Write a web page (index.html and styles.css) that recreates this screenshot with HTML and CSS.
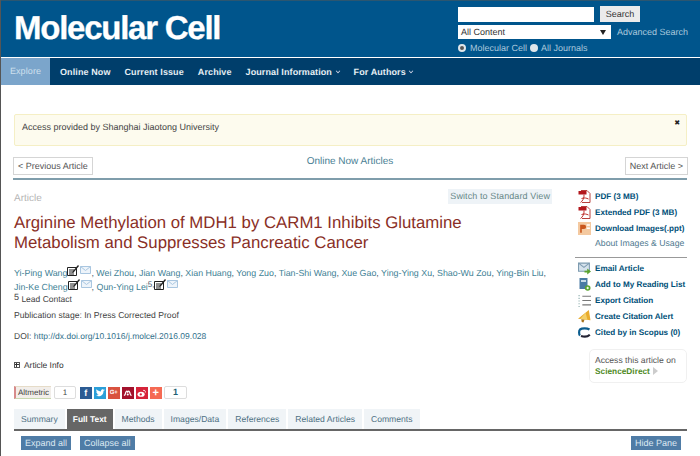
FILE: index.html
```html
<!DOCTYPE html>
<html lang="en">
<head>
    <meta charset="UTF-8">
    <title>Arginine Methylation of MDH1 by CARM1 - Molecular Cell</title>
    <link rel="stylesheet" href="styles.css">
</head>
<body>
  <svg class="defs" width="0" height="0">
    <symbol id="i-pdf" viewBox="0 0 12 13">
      <path d="M2.500 .5h6l3 3v9h-8" fill="#fff" stroke="#b8403c"/>
      <path d="M0 1h8v3.500H0z" fill="#b3171c"/>
      <path d="M2 12.500c2-1 4-5 3.500-8M3 8.500c3-1 5-.5 7 .5" fill="none" stroke="#c0332f"/>
    </symbol>
    <symbol id="i-ppt" viewBox="0 0 12 12">
      <path d="M0 0h12v12H0z" fill="#f4c9a0"/>
      <path d="M2 2.500h3.500a2 2 0 0 1 0 4H3.500V10H2z" fill="#c9561d"/>
      <path d="M8 2h3v1.500H8zM8 5h3v1.500H8z" fill="#fff"/>
    </symbol>
    <symbol id="i-email" viewBox="0 0 12 11">
      <path d="M.5 .5h10v7.500H.5z" fill="#d5e2ec" stroke="#7d9bb0"/>
      <path d="M.5 .5l5 4 5-4" fill="none" stroke="#7d9bb0"/>
      <path d="M6 7.500h2.500V5.500L12 8.200 8.500 11V9.200H6z" fill="#5aa32f"/>
    </symbol>
    <symbol id="i-list" viewBox="0 0 12 13">
      <path d="M1 0h8v11H1z" fill="#4a7ba4"/>
      <path d="M2.500 2h5v2h-5z" fill="#c9dbe8"/>
      <circle cx="9.200" cy="10" r="2.800" fill="#5aa32f"/>
      <path d="M8 10h2.400M9.200 8.800v2.400" stroke="#fff"/>
    </symbol>
    <symbol id="i-export" viewBox="0 0 12 12">
      <path d="M4 2h8M4 6h8M4 10h8" stroke="#777"/>
      <path d="M1 1v1M1 3.500v1M1 6v1M1 8.500v1M1 11v1" stroke="#8aa"/>
    </symbol>
    <symbol id="i-alert" viewBox="0 0 12 12">
      <path d="M10 0l1.500 9.500L0 8z" fill="#e9ac2e"/>
      <path d="M7 2.500l1.800 6.800L2 8.300z" fill="#f4d06a"/>
      <path d="M3 8.500l3 .5-1 2.500-1.500-.5z" fill="#a5711a"/>
    </symbol>
    <symbol id="i-scopus" viewBox="0 0 13 10">
      <path d="M11.500 2C9 .5 4 .5 2 2 .8 3.200 .8 6.800 2 8" fill="none" stroke="#0b5d8f" stroke-width="2.200"/>
      <path d="M3 8.500c3 1 7 .5 8.800-1.200" fill="none" stroke="#223" stroke-width="2.200"/>
    </symbol>
    <symbol id="i-edit" viewBox="0 0 12 11">
      <path d="M.5 2.500h9v8h-9z" fill="#fff" stroke="#222"/>
      <path d="M2 5h5M2 7h5M2 9h5" stroke="#222"/>
      <path d="M6 6l5-6 1 1-5 6-2 1z" fill="#222"/>
    </symbol>
    <symbol id="i-mail" viewBox="0 0 11 8">
      <path d="M.5 .5h10v7H.5z" fill="#eef4fa" stroke="#a9c6e0"/>
      <path d="M.5 .5l5 4 5-4" fill="none" stroke="#a9c6e0"/>
    </symbol>
  </svg>

  <header class="masthead">
    <div class="logo">Molecular Cell</div>
    <form class="search">
      <div class="search-row">
        <span class="search-input"></span>
        <span class="search-btn">Search</span>
      </div>
      <div class="search-row">
        <span class="search-select">All Content<i class="select-arrow"></i></span>
        <span class="search-adv">Advanced Search</span>
      </div>
      <div class="search-scope">
        <i class="radio radio-on"></i><span>Molecular Cell</span>
        <i class="radio"></i><span>All Journals</span>
      </div>
    </form>
  </header>

  <nav class="nav">
    <a class="nav-explore">Explore</a>
    <a>Online Now</a>
    <a>Current Issue</a>
    <a>Archive</a>
    <a>Journal Information <i class="caret"></i></a>
    <a>For Authors <i class="caret"></i></a>
  </nav>

  <div class="page">
    <div class="alert">
      Access provided by Shanghai Jiaotong University
      <span class="alert-close">&#10006;</span>
    </div>

    <div class="pager">
      <a class="pager-btn">&lt; Previous Article</a>
      <a class="pager-mid">Online Now Articles</a>
      <a class="pager-btn pager-next">Next Article &gt;</a>
    </div>

    <div class="article-top">
      <div class="article-main">
        <div class="article-head">
          <span class="article-type">Article</span>
          <a class="switch-view">Switch to Standard View</a>
        </div>
        <h1 class="title">Arginine Methylation of MDH1 by CARM1 Inhibits Glutamine Metabolism and Suppresses Pancreatic Cancer</h1>
        <p class="authors">
          <a>Yi-Ping Wang</a><svg class="ic-edit"><use href="#i-edit"/></svg><svg class="ic-mail"><use href="#i-mail"/></svg>, <a>Wei Zhou</a>, <a>Jian Wang</a>, <a>Xian Huang</a>, <a>Yong Zuo</a>, <a>Tian-Shi Wang</a>, <a>Xue Gao</a>, <a>Ying-Ying Xu</a>, <a>Shao-Wu Zou</a>, <a>Ying-Bin Liu</a>,<br>
          <a>Jin-Ke Cheng</a><svg class="ic-edit"><use href="#i-edit"/></svg><svg class="ic-mail"><use href="#i-mail"/></svg>, <a>Qun-Ying Lei</a><sup class="sup">5,</sup><svg class="ic-edit"><use href="#i-edit"/></svg><svg class="ic-mail"><use href="#i-mail"/></svg>
        </p>
        <p class="lead"><sup class="sup-lead">5</sup> Lead Contact</p>
        <p class="meta">Publication stage: In Press Corrected Proof</p>
        <p class="meta doi">DOI: <a>http://dx.doi.org/10.1016/j.molcel.2016.09.028</a></p>
        <p class="info"><i class="plus-box"></i>Article Info</p>
        <div class="share">
          <span class="altmetric">Altmetric</span>
          <span class="count">1</span>
          <span class="soc soc-fb">f</span>
          <span class="soc soc-tw"><svg viewBox="0 0 12 12"><path d="M10.500 3.500c.5-.3.800-.7 1-1.200-.4.200-.8.300-1.200.4-.8-1-2.900-.6-3 1.200v.5C5.500 4.300 3.800 3.400 2.600 2c-.5 1-.2 2 .6 2.700-.3 0-.6-.1-.9-.2 0 1 .7 1.800 1.700 2-.3.100-.6.100-.9 0 .3.800 1 1.300 1.800 1.400-.8.600-1.800.9-2.900.8 3.500 2 7.800 0 7.900-4.500 0-.2 0-.4.600-.7z" fill="#fff"/></svg></span>
          <span class="soc soc-gp">G+</span>
          <span class="soc soc-mn"><svg viewBox="0 0 12 12"><path d="M2 8.500c1.500 0 1.300-1 1.700-2.500C4.300 4 5 3.500 6 5c1-1.500 1.700-1 2.300 1 .4 1.500.2 2.500 1.700 2.500" fill="none" stroke="#fff" stroke-width="1.300"/><circle cx="6" cy="7.500" r="1.100" fill="#fff"/></svg></span>
          <span class="soc soc-wb"><svg viewBox="0 0 12 12"><ellipse cx="5.300" cy="7.300" rx="3.700" ry="2.700" fill="#fff"/><circle cx="5" cy="7.500" r="1.200" fill="#d6243a"/><path d="M7.500 3.300c1.500-.5 2.600.7 2.200 2.200" fill="none" stroke="#fff"/></svg></span>
          <span class="soc soc-ad">+</span>
          <span class="count count-bold">1</span>
        </div>
      </div>

      <aside class="side">
        <ul class="side-list side-first">
          <li><svg><use href="#i-pdf"/></svg>PDF (3 MB)</li>
          <li><svg><use href="#i-pdf"/></svg>Extended PDF (3 MB)</li>
          <li><svg><use href="#i-ppt"/></svg>Download Images(.ppt)</li>
          <li class="side-plain">About Images &amp; Usage</li>
        </ul>
        <ul class="side-list">
          <li><svg><use href="#i-email"/></svg>Email Article</li>
          <li><svg><use href="#i-list"/></svg>Add to My Reading List</li>
          <li><svg><use href="#i-export"/></svg>Export Citation</li>
          <li><svg><use href="#i-alert"/></svg>Create Citation Alert</li>
          <li><svg><use href="#i-scopus"/></svg>Cited by in Scopus (0)</li>
        </ul>
        <div class="sd-box">
          Access this article on<br>
          <b>ScienceDirect</b><i class="sd-arrow"></i>
        </div>
      </aside>
    </div>

    <div class="tabs">
      <a>Summary</a>
      <a class="tab-on">Full Text</a>
      <a>Methods</a>
      <a>Images/Data</a>
      <a>References</a>
      <a>Related Articles</a>
      <a>Comments</a>
    </div>

    <div class="tools">
      <a class="tool-btn">Expand all</a>
      <a class="tool-btn">Collapse all</a>
      <a class="tool-btn tool-hide">Hide Pane</a>
    </div>
  </div>
</body>
</html>
```

FILE: styles.css
```css
* {
  margin: 0;
  padding: 0;
  box-sizing: border-box;
}

html, body {
  height: 456px;
  overflow: hidden;
}

body {
  background-color: #fff;
  border-left: 1px solid #555;
  font-family: "Liberation Sans", Arial, sans-serif;
  font-size: 9px;
  color: #444;
  text-rendering: geometricPrecision;
}

a {
  color: inherit;
  text-decoration: none;
}

i {
  font-style: normal;
}

ul {
  list-style: none;
}

.defs {
  position: absolute;
}

/* masthead */
.masthead {
  height: 57px;
  background-color: #00558c;
  border-top: 1px solid #2c5670;
  display: flex;
  justify-content: space-between;
  padding: 5px 11px 0 13px;
}

.logo {
  font-size: 33px;
  line-height: 44px;
  font-weight: bold;
  letter-spacing: -1.250px;
  color: #fff;
  -webkit-text-stroke: 0.3px #fff;
}

.search {
  display: flex;
  flex-direction: column;
  gap: 2px;
  width: 231px;
  color: #a9c8dc;
  font-size: 9px;
  white-space: nowrap;
}

.search-row {
  display: flex;
  align-items: center;
  height: 16px;
}

.search-input {
  width: 136px;
  height: 15px;
  background-color: #fff;
}

.search-btn {
  width: 40px;
  height: 16px;
  margin-left: 6px;
  background-color: #ebebeb;
  color: #333;
  text-align: center;
  line-height: 16px;
}

.search-select {
  position: relative;
  width: 153px;
  height: 14px;
  background-color: #fff;
  color: #333;
  line-height: 14px;
  padding-left: 3px;
}

.select-arrow {
  position: absolute;
  right: 5px;
  top: 5px;
  border-left: 3px solid transparent;
  border-right: 3px solid transparent;
  border-top: 5px solid #222;
}

.search-adv {
  margin-left: 6px;
}

.search-scope {
  display: flex;
  align-items: center;
  height: 13px;
  margin-top: -1px;
  gap: 3px;
}

.radio {
  width: 8px;
  height: 8px;
  border-radius: 50%;
  background-color: #dfe6ea;
}

.radio-on {
  border: 2px solid #dfe6ea;
  background-color: #555;
  margin-right: 1px;
}

/* nav */
.nav {
  height: 27px;
  margin-top: 1px;
  background-color: #003e6b;
  display: flex;
  align-items: center;
  color: #e6eef4;
  font-size: 9px;
  font-weight: bold;
  letter-spacing: 0.1px;
}

.nav a {
  margin-right: 14px;
}

.nav .nav-explore {
  width: 49px;
  height: 27px;
  margin-right: 10px;
  background-color: #7ba5cb;
  color: #cfe0ee;
  font-weight: normal;
  text-align: center;
  line-height: 27px;
}

.caret {
  display: inline-block;
  width: 4px;
  height: 4px;
  margin: 0 0 2px 1px;
  border-right: 1px solid #dde;
  border-bottom: 1px solid #dde;
  transform: scale(0.8) rotate(45deg);
}

/* page */
.page {
  padding: 0 13px;
}

.alert {
  position: relative;
  height: 32px;
  margin-top: 29px;
  background-color: #fdfbee;
  border: 1px solid #f5efc5;
  border-radius: 2px;
  padding: 0 7px;
  line-height: 25px;
  color: #444;
}

.alert-close {
  position: absolute;
  top: 4px;
  right: 6px;
  font-family: "DejaVu Sans", sans-serif;
  font-size: 7px;
  line-height: 9px;
  color: #222;
}

.pager {
  display: grid;
  grid-template-columns: 1fr auto 1fr;
  align-items: start;
  height: 23px;
  margin: 11px 0 0 -1px;
  border-bottom: 2px solid #7f9dab;
}

.pager-btn {
  justify-self: start;
  height: 18px;
  padding: 0 4px;
  background-color: #fff;
  border: 1px solid #d5d5d5;
  line-height: 16px;
  color: #555;
}

.pager-next {
  justify-self: end;
  margin-right: -1px;
}

.pager-mid {
  color: #4b7f95;
  font-size: 10px;
  line-height: 10px;
}

.article-top {
  display: flex;
  justify-content: space-between;
  height: 229px;
}

.article-main {
  width: 538px;
  padding-top: 9px;
}

.article-head {
  display: flex;
  justify-content: space-between;
  height: 15px;
  align-items: center;
}

.article-type {
  color: #b5b5b5;
  font-size: 10px;
  margin-top: 3px;
}

.switch-view {
  background-color: #eef3f7;
  color: #688;
  height: 15px;
  line-height: 15px;
  padding: 0 2px;
  letter-spacing: 0.1px;
}

.title {
  margin-top: 9px;
  font-size: 16.800px;
  font-weight: normal;
  line-height: 20px;
  color: #8a2f26;
  width: 480px;
}

.authors {
  margin-top: 12px;
  font-size: 8.850px;
  white-space: nowrap;
  line-height: 12px;
  color: #456;
}

.authors a {
  color: #3e7f95;
}

.ic-edit {
  width: 12px;
  height: 11px;
}

.ic-mail {
  width: 11px;
  height: 8px;
  margin: 0 0 2px 1px;
}

.sup {
  font-size: 8px;
  line-height: 0;
  vertical-align: 3px;
}

.lead {
  font-size: 8.500px;
  line-height: 14px;
  margin-top: -1px;
  color: #444;
}

.sup-lead {
  font-size: 9px;
  line-height: 0;
  vertical-align: 2px;
}

.meta {
  font-size: 8.600px;
  margin-top: 4px;
  line-height: 11px;
}

.doi {
  font-size: 8.500px;
  margin-top: 10px;
}

.doi a {
  color: #2f6f8a;
}

.info {
  display: flex;
  align-items: center;
  margin-top: 17px;
  height: 11px;
  font-size: 8.400px;
  color: #333;
}

.plus-box {
  position: relative;
  width: 6px;
  height: 6px;
  margin-right: 4px;
  border: 1px solid #555;
}

.plus-box::before {
  content: "";
  position: absolute;
  left: 0;
  top: 1px;
  width: 4px;
  height: 2px;
  border-top: 1px solid #333;
}

.plus-box::after {
  content: "";
  position: absolute;
  left: 1px;
  top: 0;
  width: 2px;
  height: 4px;
  border-left: 1px solid #333;
}

.share {
  display: flex;
  align-items: center;
  margin-top: 16px;
  height: 13px;
}

.altmetric {
  width: 37px;
  height: 13px;
  background-color: #f2eeea;
  border-left: 2px solid #d78a8a;
  border-bottom: 1px solid #c8d8b0;
  border-top: 1px solid #e6dcc8;
  font-size: 8px;
  line-height: 11px;
  text-align: center;
  color: #444;
}

.count {
  width: 22px;
  height: 13px;
  margin-left: 3px;
  border: 1px solid #ddd;
  border-radius: 2px;
  font-size: 8px;
  line-height: 11px;
  text-align: center;
  color: #444;
}

.count-bold {
  width: 23px;
  margin-left: 2.500px;
  font-size: 9px;
  font-weight: bold;
  color: #1f5f73;
}

.soc {
  width: 11.500px;
  height: 12px;
  margin-left: 2.500px;
  color: #fff;
  font-size: 9px;
  font-weight: bold;
  line-height: 12px;
  text-align: center;
}

.soc svg {
  display: block;
  width: 100%;
  height: 12px;
}

.soc-fb {
  margin-left: 4px;
  background-color: #2b5b93;
}

.soc-tw {
  background-color: #2b9fd9;
}

.soc-gp {
  background-color: #d9523f;
  font-size: 6px;
}

.soc-mn {
  background-color: #a3122c;
}

.soc-wb {
  background-color: #d6243a;
}

.soc-ad {
  background-color: #f56a53;
  font-size: 11px;
}

/* right column */
.side {
  width: 112px;
  padding-top: 8px;
  font-size: 8.150px;
  color: #005078;
  font-weight: bold;
}

.side-list {
  padding: 0 0 0 3px;
}

.side-first {
  height: 70px;
  border-bottom: 1px solid #999;
}

.side-list li {
  display: flex;
  align-items: center;
  height: 16px;
  white-space: nowrap;
}

.side-list svg {
  flex: none;
  width: 13px;
  height: 13px;
  margin-right: 4px;
}

.side-first .side-plain {
  height: 14px;
  padding-left: 17px;
  font-size: 8.700px;
  font-weight: normal;
  color: #4f7a90;
}

.side-first + .side-list {
  margin-top: 2px;
}

.sd-box {
  width: 98px;
  height: 34px;
  margin: 9px 0 0 14px;
  padding: 5px 5px;
  border: 1px solid #f0f0f0;
  border-radius: 5px;
  font-size: 8.600px;
  font-weight: normal;
  line-height: 11px;
  color: #555;
}

.sd-box b {
  font-size: 8.300px;
  color: #4f8a1f;
}

.sd-arrow {
  display: inline-block;
  margin-left: 3px;
  border-left: 5px solid #ccc;
  border-top: 4px solid transparent;
  border-bottom: 4px solid transparent;
  vertical-align: -1px;
}

/* tabs */
.tabs {
  display: flex;
  gap: 2px;
  height: 22px;
  border-bottom: 2px solid #666;
  font-size: 8.600px;
  color: #4f7184;
}

.tabs a {
  height: 20px;
  padding: 0 7px;
  background-color: #f0f4f7;
  line-height: 20px;
}

.tabs .tab-on {
  padding: 0 6px;
  font-size: 8.400px;
  background-color: #666;
  color: #fff;
  font-weight: bold;
}

.tools {
  display: flex;
  gap: 9px;
  margin-top: 5px;
  padding-left: 7px;
}

.tool-btn {
  height: 14px;
  padding: 0 4px;
  background-color: #4f7ca6;
  color: #dce8f2;
  line-height: 14px;
}

.tool-hide {
  margin-left: auto;
  margin-right: 6px;
}
```
